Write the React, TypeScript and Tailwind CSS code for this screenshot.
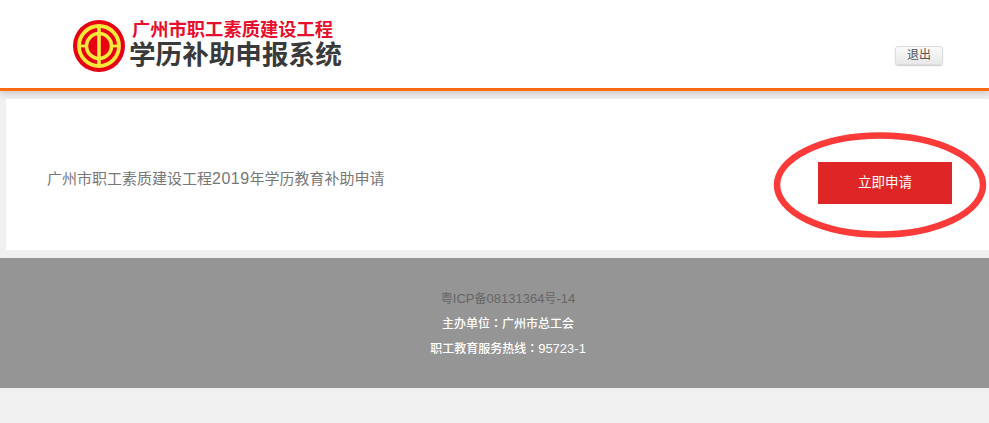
const cjk = "font-['Liberation_Sans','Noto_Sans_CJK_SC',sans-serif]";

const Logo = () => (
  <svg width="52" height="52" viewBox="0 0 52 52" className="shrink-0">
    <circle cx="26" cy="26" r="26" fill="#e60012" />
    <circle cx="26" cy="26" r="20" fill="none" stroke="#f7e93c" strokeWidth="3.8" />
    <circle cx="26" cy="26" r="12.5" fill="none" stroke="#f7e93c" strokeWidth="3.6" />
    <rect x="6" y="24.6" width="8" height="2.8" fill="#f7e93c" />
    <rect x="38" y="24.6" width="8" height="2.8" fill="#f7e93c" />
    <rect x="24.2" y="6" width="3.6" height="40" fill="#f7e93c" />
  </svg>
);

// full-width colon sits centred in its cell in the TC cut
const Colon = () => <span className="font-['Noto_Sans_CJK_TC',sans-serif] leading-none">：</span>;

export default function App() {
  return (
    <div className={`min-h-[423px] bg-[#f0f0f0] ${cjk}`}>
      <header className="h-[91px] bg-white border-b-[3px] border-[#ff6a13] flex items-start justify-between pl-[73px] pr-[46px] shadow-[0_3px_7px_rgba(0,0,0,0.16)] relative">
        <div className="flex items-center mt-[20px]">
          <Logo />
          <div className="flex flex-col ml-[4px] -mt-[2px]">
            <div className="text-[18.3px] leading-[20px] font-bold text-[#e60f2d] ml-[3px] whitespace-nowrap">
              广州市职工素质建设工程
            </div>
            <div className="text-[26.6px] leading-[30px] font-bold text-[#3a3a3a] whitespace-nowrap">
              学历补助申报系统
            </div>
          </div>
        </div>
        <button className="mt-[46px] w-[48px] h-[19px] rounded-[3px] border border-[#dcdcdc] bg-gradient-to-b from-[#fafafa] to-[#e8e8e8] shadow-[0_1px_1px_rgba(0,0,0,0.2)] text-[12px] leading-[17px] text-[#555]">
          退出
        </button>
      </header>

      <main className="ml-[6px] mt-[8px] h-[151px] bg-white flex items-start justify-between pl-[41px] pr-[37px] pt-[63px] relative">
        <p className="text-[15px] leading-[34px] text-[#777] whitespace-nowrap">
          广州市职工素质建设工程<span className="text-[16px] tracking-[0.5px]">2019</span>年学历教育补助申请
        </p>
        <button className="w-[134px] h-[42px] bg-[#dd2625] text-white text-[13.5px] relative z-10">
          立即申请
        </button>
        <svg width="214" height="106" viewBox="0 0 214 106" className="absolute left-[767px] top-[33px]">
          <ellipse cx="107" cy="53" rx="103" ry="49.5" fill="none" stroke="#fb3a3a" strokeWidth="6.5" />
        </svg>
      </main>

      <footer className="mt-[8px] h-[130px] bg-[#959595] pt-[29px] pl-[27px] text-center text-[12px] leading-[25px]">
        <p className="h-[25px] text-[#666]">
          粤<span className="text-[13px] leading-none">ICP</span>备<span className="text-[13px] leading-none">08131364</span>号<span className="text-[13px] leading-none">-14</span>
        </p>
        <p className="h-[25px] text-white font-medium">主办单位<Colon />广州市总工会</p>
        <p className="h-[25px] text-white font-medium">职工教育服务热线<Colon /><span className="text-[13px] leading-none">95723-1</span></p>
      </footer>
    </div>
  );
}
